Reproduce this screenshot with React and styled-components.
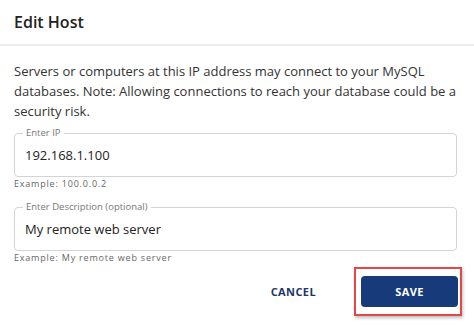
import React from "react";
import styled, { createGlobalStyle } from "styled-components";

const Global = createGlobalStyle`
  html, body { margin: 0; padding: 0; background: #fff; }
  body { font-family: "Open Sans", "Noto Sans", sans-serif; }
`;

const Dialog = styled.div`
  width: 474px;
  height: 326px;
  background: #fff;
  display: flex;
  flex-direction: column;
  box-sizing: border-box;
  overflow: hidden;
`;

const Header = styled.div`
  flex-shrink: 0;
  height: 44px;
  display: flex;
  align-items: center;
  padding: 0 14px;
  border-bottom: 2px solid #ececec;
  box-sizing: content-box;
`;

const Title = styled.h2`
  margin: 0;
  font-size: 16px;
  font-weight: 600;
  color: #222;
`;

const Intro = styled.p`
  margin: 0 0 7px;
  font-size: 13px;
  line-height: 20px;
  color: #333;
`;

const Field = styled.fieldset`
  margin: 0;
  padding: 0 10px;
  height: 49px;
  box-sizing: border-box;
  border: 1px solid #d4d4d4;
  border-radius: 4px;
  display: block;
  min-width: 0;
`;

const Legend = styled.legend`
  font-size: 9.5px;
  color: #777;
  padding: 0 3px;
  margin-left: -2px;
  line-height: 10px;
`;

const Value = styled.div`
  font-size: 13px;
  line-height: 20px;
  color: #222;
  padding-top: 7px;
`;

const Helper = styled.div`
  font-size: 9px;
  letter-spacing: 0.8px;
  line-height: 12px;
  color: #666;
  margin: 1px 0 12px 0;
`;

const Body = styled.div`
  flex-shrink: 0;
  padding: 15px 17px 0 14px;
  display: flex;
  flex-direction: column;

  & > ${Helper}:last-child {
    margin-bottom: 0;
  }
`;

const Footer = styled.div`
  flex-shrink: 0;
  margin-top: auto;
  display: flex;
  justify-content: flex-end;
  align-items: center;
  padding: 0 12px 10px 0;
  gap: 24px;
`;

const TextButton = styled.button`
  background: none;
  border: none;
  font-family: inherit;
  font-weight: 700;
  font-size: 11px;
  color: #1d3767;
  letter-spacing: 0.4px;
  cursor: pointer;
  padding: 0 14px;
`;

const Highlight = styled.div`
  border: 2px solid #e0494a;
  padding: 7px 2px 7px 5px;
  box-shadow: 1px 2px 3px rgba(0, 0, 0, 0.25);
`;

const PrimaryButton = styled.button`
  display: block;
  width: 97px;
  height: 31px;
  background: #163a7a;
  color: #fff;
  border: none;
  border-radius: 4px;
  font-family: inherit;
  font-weight: 700;
  font-size: 11px;
  letter-spacing: 0.4px;
  cursor: pointer;
`;

export default function App() {
  return (
    <Dialog>
      <Global />
      <Header>
        <Title>Edit Host</Title>
      </Header>
      <Body>
        <Intro>
          Servers or computers at this IP address may connect to your MySQL
          databases. Note: Allowing connections to reach your database could be a
          security risk.
        </Intro>
        <Field>
          <Legend>Enter IP</Legend>
          <Value>192.168.1.100</Value>
        </Field>
        <Helper>Example: 100.0.0.2</Helper>
        <Field>
          <Legend>Enter Description (optional)</Legend>
          <Value>My remote web server</Value>
        </Field>
        <Helper>Example: My remote web server</Helper>
      </Body>
      <Footer>
        <TextButton>CANCEL</TextButton>
        <Highlight>
          <PrimaryButton>SAVE</PrimaryButton>
        </Highlight>
      </Footer>
    </Dialog>
  );
}
